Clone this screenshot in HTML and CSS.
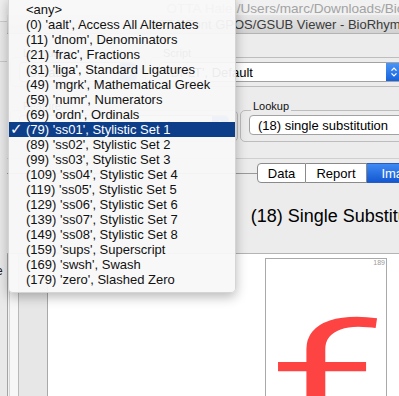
FILE: index.html
```html
<!DOCTYPE html>
<html>
<head>
<meta charset="utf-8">
<link rel="stylesheet" href="styles.css">
</head>
<body>
<div class="screen">
  <div class="leftstrip">
    <div class="ls-top"></div>
    <div class="ls-mid"></div>
    <div class="ls-label">e</div>
  </div>
  <div class="main">
    <div class="backbar"><span class="bb-pre">OTTA Hale</span><span>/Users/marc/Downloads/BioRhyme/BioRhyme-Regular.ttf</span></div>
    <div class="titlebar"><span class="tb-pre">OTTA Font GP</span><span>OS/GSUB Viewer - BioRhyme-Regular.ttf</span></div>
    <div class="body">
      <div class="row row-1">
        <div class="group group-lang">
          <div class="group-label">Language</div>
          <div class="popup popup-lang"><span>Default</span><span class="stepper"><svg width="8" height="12" viewBox="0 0 8 12"><path d="M1.5 4.6 L4 2.1 L6.5 4.6 M1.5 7.4 L4 9.9 L6.5 7.4" fill="none" stroke="#fff" stroke-width="1.3"/></svg></span></div>
        </div>
        <div class="group group-script">
          <div class="group-label">Script</div>
          <div class="popup popup-script"><span>'DFLT', Default</span><span class="stepper"><svg width="8" height="12" viewBox="0 0 8 12"><path d="M1.5 4.6 L4 2.1 L6.5 4.6 M1.5 7.4 L4 9.9 L6.5 7.4" fill="none" stroke="#fff" stroke-width="1.3"/></svg></span></div>
        </div>
      </div>
      <div class="row row-2">
        <div class="group group-feature">
          <div class="group-label">Feature</div>
          <div class="popup popup-feature"><span>(79) 'ss01', Stylistic Set 1</span><span class="stepper"><svg width="8" height="12" viewBox="0 0 8 12"><path d="M1.5 4.6 L4 2.1 L6.5 4.6 M1.5 7.4 L4 9.9 L6.5 7.4" fill="none" stroke="#fff" stroke-width="1.3"/></svg></span></div>
        </div>
        <div class="group group-lookup">
          <div class="group-label">Lookup</div>
          <div class="popup popup-lookup"><span>(18) single substitution</span></div>
        </div>
      </div>
      <div class="sep"></div>
      <div class="tabbar">
        <div class="tab-rule"></div>
        <div class="tab tab-data">Data</div>
        <div class="tab tab-report">Report</div>
        <div class="tab tab-image">Image</div>
      </div>
      <div class="page-title">(18) Single Substitution</div>
      <div class="bottom">
        <div class="bcol1"></div>
        <div class="bcol2"></div>
        <div class="canvas">
          <div class="glyphbox">
            <span class="glyph-num">189</span>
            <span class="glyph-f">f</span>
          </div>
        </div>
      </div>
    </div>
  </div>

  <div class="menu">
    <div class="mi"><span class="mi-check"></span><span>&lt;any&gt;</span></div>
    <div class="mi"><span class="mi-check"></span><span>(0) 'aalt', Access All Alternates</span></div>
    <div class="mi"><span class="mi-check"></span><span>(11) 'dnom', Denominators</span></div>
    <div class="mi"><span class="mi-check"></span><span>(21) 'frac', Fractions</span></div>
    <div class="mi"><span class="mi-check"></span><span>(31) 'liga', Standard Ligatures</span></div>
    <div class="mi"><span class="mi-check"></span><span>(49) 'mgrk', Mathematical Greek</span></div>
    <div class="mi"><span class="mi-check"></span><span>(59) 'numr', Numerators</span></div>
    <div class="mi"><span class="mi-check"></span><span>(69) 'ordn', Ordinals</span></div>
    <div class="mi mi-selected"><span class="mi-check">✓</span><span>(79) 'ss01', Stylistic Set 1</span></div>
    <div class="mi"><span class="mi-check"></span><span>(89) 'ss02', Stylistic Set 2</span></div>
    <div class="mi"><span class="mi-check"></span><span>(99) 'ss03', Stylistic Set 3</span></div>
    <div class="mi"><span class="mi-check"></span><span>(109) 'ss04', Stylistic Set 4</span></div>
    <div class="mi"><span class="mi-check"></span><span>(119) 'ss05', Stylistic Set 5</span></div>
    <div class="mi"><span class="mi-check"></span><span>(129) 'ss06', Stylistic Set 6</span></div>
    <div class="mi"><span class="mi-check"></span><span>(139) 'ss07', Stylistic Set 7</span></div>
    <div class="mi"><span class="mi-check"></span><span>(149) 'ss08', Stylistic Set 8</span></div>
    <div class="mi"><span class="mi-check"></span><span>(159) 'sups', Superscript</span></div>
    <div class="mi"><span class="mi-check"></span><span>(169) 'swsh', Swash</span></div>
    <div class="mi"><span class="mi-check"></span><span>(179) 'zero', Slashed Zero</span></div>
  </div>
</div>
</body>
</html>
```

FILE: styles.css
```css
* { box-sizing: border-box; }
html, body { margin: 0; padding: 0; }
body {
  width: 399px;
  height: 396px;
  overflow: hidden;
  background: #ececec;
  font-family: "Liberation Sans", Arial, sans-serif;
  font-size: 13px;
  color: #111;
}
.screen {
  position: relative;
  display: flex;
  width: 399px;
  height: 396px;
  overflow: hidden;
}

/* left strip (other window) */
.leftstrip {
  flex: 0 0 7px;
  display: flex;
  flex-direction: column;
  background: #e9e9e9;
  overflow: hidden;
}
.leftstrip > * { flex-shrink: 0; }
.ls-top { height: 22px; background: #efefef; border-bottom: 1px solid #cdcdcd; }
.ls-mid { height: 40px; border-bottom: 1px solid #c9c9c9; }
.ls-label {
  margin-top: 202px;
  margin-left: -4px;
  font-size: 12px;
  line-height: 14px;
  color: #222;
}

/* main window */
.main {
  flex: 1 1 auto;
  min-width: 0;
  display: flex;
  flex-direction: column;
  overflow: hidden;
}
.main > * { flex-shrink: 0; }
.backbar {
  height: 15px;
  padding-top: 1px;
  display: flex;
  background: #f1f1f1;
  color: #a3a3a3;
  font-size: 13.6px;
  line-height: 15px;
  white-space: nowrap;
  overflow: hidden;
}
.bb-pre { flex: 0 0 229.7px; text-align: right; padding-right: 4px; }
.titlebar {
  height: 19px;
  padding-top: 1px;
  display: flex;
  background: linear-gradient(#e6e6e6, #d2d2d2);
  border-bottom: 1px solid #b3b3b3;
  color: #3b3b3b;
  line-height: 18px;
  white-space: nowrap;
  overflow: hidden;
}
.tb-pre { flex: 0 0 227px; text-align: right; }

.body {
  flex: 1 1 auto;
  display: flex;
  flex-direction: column;
}
.body > * { flex-shrink: 0; }
.row { display: flex; margin-left: 3px; }
.row-1 { margin-top: 23px; gap: 4px; }
.row-2 { margin-top: 23px; gap: 2px; }

.group {
  flex: 0 0 auto;
  display: flex;
  flex-direction: column;
  border: 1px solid #bdbdbd;
  border-radius: 5px;
  padding: 0 8px 4px;
}
.group-label {
  align-self: flex-start;
  margin: -10px 0 3px 2px;
  padding: 0 2px;
  background: #ececec;
  font-size: 11px;
  line-height: 11px;
  color: #111;
}
.group-lang { width: 136px; }
.group-script { width: 262px; }
.group-feature { width: 228px; padding-bottom: 6px; }
.group-lookup { width: 190px; padding-bottom: 6px; }

.popup {
  height: 20px;
  display: flex;
  align-items: center;
  padding-left: 8px;
  background: #fff;
  border: 1px solid #a2a2a2;
  border-radius: 4px;
  white-space: nowrap;
  overflow: hidden;
  color: #000;
}
.popup-lang { width: 118px; }
.popup-script { width: 244px; }
.popup-feature { width: 210px; }
.popup-lookup { width: 170px; }
.stepper {
  margin-left: auto;
  align-self: stretch;
  width: 16px;
  flex: 0 0 16px;
  display: flex;
  align-items: center;
  justify-content: center;
  background: linear-gradient(#4b95f6, #1662dc);
}

.sep { margin-top: 16px; height: 1px; background: #cfcfcf; }

.tabbar {
  margin-top: 4px;
  height: 20px;
  display: flex;
  align-items: center;
}
.tab-rule { flex: 0 0 250px; height: 1px; background: #9a9a9a; }
.tab {
  flex: 0 0 auto;
  height: 20px;
  display: flex;
  align-items: center;
  justify-content: center;
  background: #fff;
  border: 1px solid #8a8a8a;
  border-left: none;
  color: #000;
}
.tab-data { width: 49px; border-left: 1px solid #8a8a8a; border-radius: 4px 0 0 4px; }
.tab-report { width: 61px; }
.tab-image {
  width: 66px;
  background: linear-gradient(#3f8af3, #1458d2);
  border-color: #2a5cc0;
  color: #fff;
}

.page-title {
  margin-top: 22px;
  padding-left: 243.7px;
  font-size: 18px;
  line-height: 22px;
  white-space: nowrap;
  color: #000;
}

.bottom {
  margin-top: 26px;
  flex: 1 1 auto;
  display: flex;
  border-top: 1px solid #b4b4b4;
}
.bcol1 {
  flex: 0 0 12px;
  border-left: 1px solid #a4a4a4;
  border-right: 1px solid #b9b9b9;
  background: linear-gradient(to right, #f2f2f2 0 1px, #d5d5d5 1px 2px, #f7f7f7 2px);
}
.bcol2 {
  flex: 0 0 29px;
  background: #e7e7e7;
  border-right: 1px solid #a9a9a9;
}
.canvas {
  flex: 1 1 auto;
  background: #fff;
  padding: 4px 0 0 217px;
}
.glyphbox {
  position: relative;
  width: 122px;
  height: 200px;
  border: 1px solid #a9a9a9;
}
.glyph-num {
  position: absolute;
  top: 0;
  right: 1px;
  font-size: 7px;
  line-height: 7px;
  color: #9a9a9a;
}
.glyph-f {
  position: absolute;
  left: 1.5px;
  top: 42.2px;
  font-family: Roboto, sans-serif;
  font-weight: 300;
  font-size: 195px;
  line-height: 195px;
  color: #fe4343;
  transform: scaleX(1.66);
  transform-origin: 0 0;
}

/* open popup menu */
.menu {
  position: absolute;
  left: 8px;
  top: -4px;
  width: 228px;
  padding: 5px 0;
  background: rgba(248, 248, 248, 0.95);
  border: 1px solid rgba(0, 0, 0, 0.14);
  border-radius: 5px;
  box-shadow: 0 4px 12px rgba(0, 0, 0, 0.28);
}
.mi {
  display: flex;
  height: 15px;
  line-height: 15px;
  white-space: nowrap;
  color: #111;
}
.mi-check {
  flex: 0 0 17px;
  padding-left: 1px;
  font-family: "DejaVu Sans", sans-serif;
  font-size: 15px;
  font-weight: bold;
}
.mi-selected { background: #0d3e8a; color: #fff; }
```
